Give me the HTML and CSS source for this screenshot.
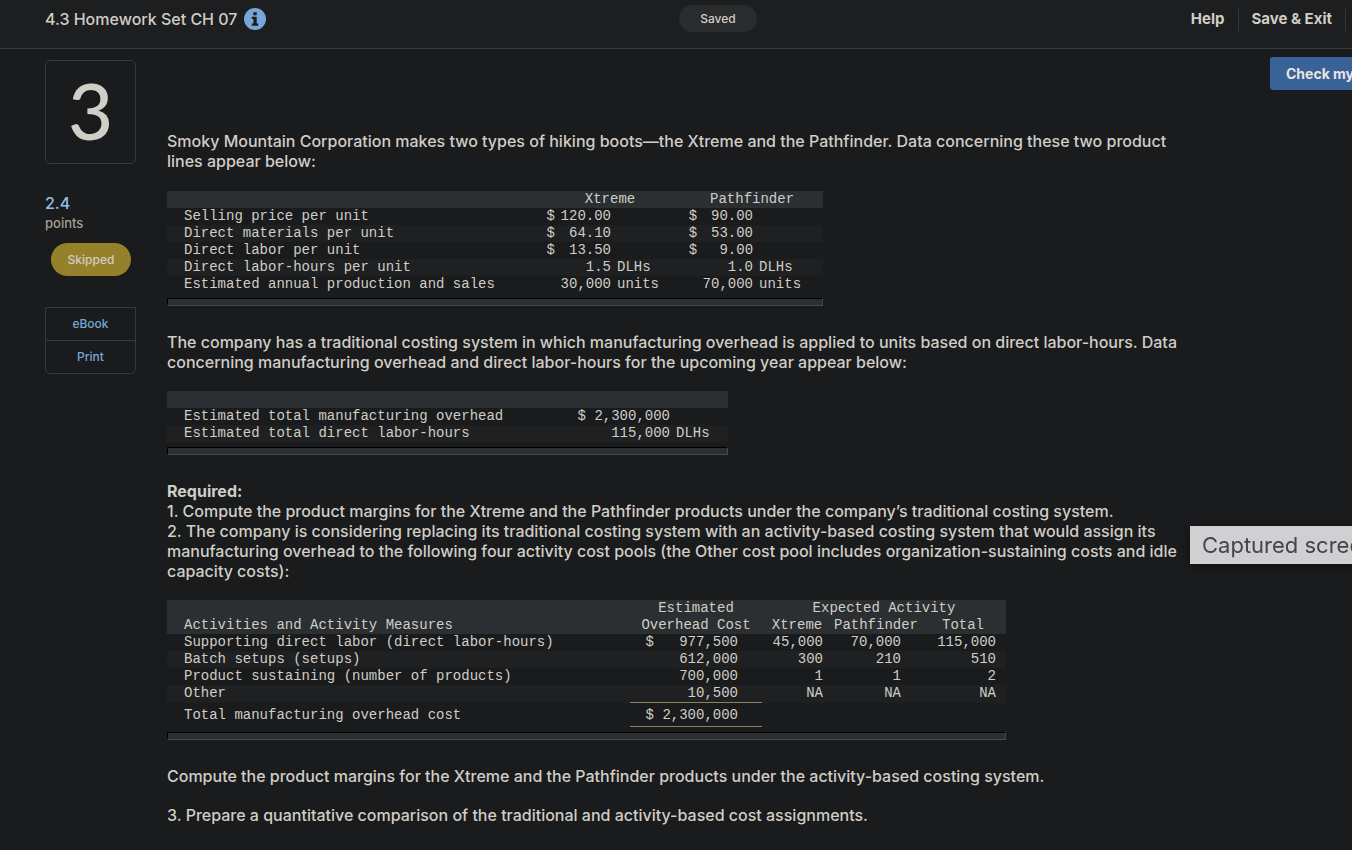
FILE: index.html
```html
<!DOCTYPE html>
<html lang="en">
<head>
  <meta charset="UTF-8" />
  <meta name="viewport" content="width=device-width, initial-scale=1" />
  <title>4.3 Homework Set CH 07</title>
  <link rel="stylesheet" href="styles.css">
</head>
<body>
  <header class="topbar">
    <div class="topbar-inner">
      <div class="assignment">
        <h1>4.3 Homework Set CH 07</h1>
        <button class="info" type="button" aria-label="Assignment info">
          <svg width="22" height="22" viewBox="0 0 22 22" aria-hidden="true">
            <circle cx="11" cy="11" r="11" fill="#78a6d8" />
            <path d="M9.3 4.2h3.4v3H9.3zM7.8 8.8h4.9v6.7h1.5v2.2H7.8v-2.2h1.6V11H7.8z" fill="#1b1d1e" />
          </svg>
        </button>
      </div>
      <span class="saved">Saved</span>
      <nav class="actions">
        <a href="#">Help</a>
        <a href="#">Save &amp; Exit</a>
      </nav>
    </div>
  </header>

  <main class="page">
    <aside class="sidebar">
      <div class="number">3</div>
      <div class="score">2.4</div>
      <div class="points">points</div>
      <span class="skipped">Skipped</span>
      <div class="tools">
        <a href="#">eBook</a>
        <a href="#">Print</a>
      </div>
    </aside>

    <section class="question">
      <div class="toolbar">
        <button class="check" type="button">Check my work</button>
      </div>

      <p class="first">Smoky Mountain Corporation makes two types of hiking boots—the Xtreme and the Pathfinder. Data concerning these two product<br>lines appear below:</p>

      <table class="data">
        <colgroup>
          <col class="w372"><col class="w16"><col class="w56"><col class="w70"><col class="w16"><col class="w56"><col class="w70">
        </colgroup>
        <thead>
          <tr><th></th><th colspan="3">Xtreme</th><th colspan="3">Pathfinder</th></tr>
        </thead>
        <tbody>
          <tr><td>Selling price per unit</td><td>$</td><td>120.00</td><td></td><td>$</td><td>90.00</td><td></td></tr>
          <tr><td>Direct materials per unit</td><td>$</td><td>64.10</td><td></td><td>$</td><td>53.00</td><td></td></tr>
          <tr><td>Direct labor per unit</td><td>$</td><td>13.50</td><td></td><td>$</td><td>9.00</td><td></td></tr>
          <tr><td>Direct labor-hours per unit</td><td></td><td>1.5</td><td class="unit">DLHs</td><td></td><td>1.0</td><td class="unit">DLHs</td></tr>
          <tr><td>Estimated annual production and sales</td><td></td><td>30,000</td><td class="unit">units</td><td></td><td>70,000</td><td class="unit">units</td></tr>
        </tbody>
        <tfoot>
          <tr><td colspan="7"><div class="bar"></div></td></tr>
        </tfoot>
      </table>

      <p>The company has a traditional costing system in which manufacturing overhead is applied to units based on direct labor-hours. Data<br>concerning manufacturing overhead and direct labor-hours for the upcoming year appear below:</p>

      <table class="data">
        <colgroup>
          <col class="w403"><col class="w16"><col class="w84"><col class="w58">
        </colgroup>
        <thead>
          <tr><th></th><th></th><th></th><th></th></tr>
        </thead>
        <tbody>
          <tr><td>Estimated total manufacturing overhead</td><td>$</td><td>2,300,000</td><td></td></tr>
          <tr><td>Estimated total direct labor-hours</td><td></td><td>115,000</td><td class="unit">DLHs</td></tr>
        </tbody>
        <tfoot>
          <tr><td colspan="4"><div class="bar"></div></td></tr>
        </tfoot>
      </table>

      <p><strong>Required:</strong><br>1. Compute the product margins for the Xtreme and the Pathfinder products under the company’s traditional costing system.<br>2. The company is considering replacing its traditional costing system with an activity-based costing system that would assign its<br>manufacturing overhead to the following four activity cost pools (the Other cost pool includes organization-sustaining costs and idle<br>capacity costs):</p>

      <table class="data activity">
        <colgroup>
          <col class="w463"><col class="w24"><col class="w84"><col class="w24"><col class="w70"><col class="w88"><col class="w86">
        </colgroup>
        <thead>
          <tr><th></th><th colspan="3">Estimated</th><th colspan="3">Expected Activity</th></tr>
          <tr><th>Activities and Activity Measures</th><th colspan="3">Overhead Cost</th><th>Xtreme</th><th>Pathfinder</th><th>Total</th></tr>
        </thead>
        <tbody>
          <tr><td>Supporting direct labor (direct labor-hours)</td><td>$</td><td>977,500</td><td></td><td>45,000</td><td>70,000</td><td>115,000</td></tr>
          <tr><td>Batch setups (setups)</td><td></td><td>612,000</td><td></td><td>300</td><td>210</td><td>510</td></tr>
          <tr><td>Product sustaining (number of products)</td><td></td><td>700,000</td><td></td><td>1</td><td>1</td><td>2</td></tr>
          <tr><td>Other</td><td></td><td>10,500</td><td></td><td>NA</td><td>NA</td><td>NA</td></tr>
          <tr class="total"><td>Total manufacturing overhead cost</td><td class="sum">$</td><td class="sum">2,300,000</td><td class="sum"></td><td></td><td></td><td></td></tr>
        </tbody>
        <tfoot>
          <tr><td colspan="7"><div class="bar"></div></td></tr>
        </tfoot>
      </table>

      <p>Compute the product margins for the Xtreme and the Pathfinder products under the activity-based costing system.</p>
      <p class="next">3. Prepare a quantitative comparison of the traditional and activity-based cost assignments.</p>
    </section>
  </main>

  <div class="toast" role="status">Captured screenshot</div>
</body>
</html>
```
FILE: styles.css
```css
* {
  box-sizing: border-box;
}
body {
  margin: 0;
  background: #191b1c;
  color: #d1cdc7;
  font-family: Inter, "Liberation Sans", sans-serif;
  font-size: 16px;
  font-weight: 500;
  line-height: 20px;
  overflow: hidden;
}
a {
  text-decoration: none;
}
button {
  font-family: inherit;
  border: none;
  cursor: pointer;
}

/* top bar, runs past the right edge of the window */
.topbar {
  background: #1c1e1f;
  border-bottom: 1px solid #36393b;
  overflow: hidden;
}
.topbar-inner {
  display: grid;
  grid-template-columns: 1fr auto 1fr;
  align-items: start;
  height: 48px;
  margin-right: -84px;
  padding: 5px 45px 0;
}
.assignment {
  display: flex;
  align-items: center;
  gap: 7px;
  height: 28px;
}
.assignment h1 {
  margin: 0;
  font-size: 16px;
  font-weight: 500;
}
.info {
  display: flex;
  padding: 0;
  background: none;
}
.saved {
  padding: 0 21px;
  border-radius: 14px;
  background: #292b2d;
  font-size: 12px;
  line-height: 27px;
}
.actions {
  display: flex;
  justify-content: flex-end;
  padding: 4px 45px 0 0;
}
.actions a {
  padding: 0 13px;
  border-right: 1px solid #36393b;
  color: #d1cdc7;
  font-size: 15px;
  font-weight: bold;
  line-height: 20px;
  height: 22px;
}

.page {
  display: grid;
  grid-template-columns: 91px 1fr;
  gap: 31px;
  margin-right: -84px;
  padding: 0 45px;
}

/* left column */
.sidebar {
  padding-top: 11px;
}
.number {
  height: 104px;
  border: 1px solid #36393b;
  border-radius: 5px;
  font-family: Lato, sans-serif;
  font-size: 78px;
  line-height: 98px;
  text-align: center;
}
.score {
  margin-top: 29px;
  color: #93bfe8;
}
.points {
  color: #a59f93;
  font-size: 13px;
}
.skipped {
  display: block;
  margin: 10px 5px 31px 6px;
  border-radius: 17px;
  background: #94812a;
  font-size: 12px;
  line-height: 33px;
  text-align: center;
}
.tools {
  border: 1px solid #36393b;
  border-radius: 0 0 5px 5px;
}
.tools a {
  display: block;
  color: #78a6d8;
  font-size: 12px;
  line-height: 32px;
  text-align: center;
}
.tools a + a {
  border-top: 1px solid #36393b;
}

/* question text */
.toolbar {
  display: flex;
  justify-content: flex-end;
  padding-top: 8px;
}
.check {
  width: 121px;
  padding: 0 0 0 16px;
  border-radius: 3px;
  background: #3b6296;
  color: #e8e6e3;
  font-size: 14px;
  font-weight: bold;
  line-height: 33px;
  text-align: left;
  white-space: nowrap;
}
.question p {
  margin: 26px 0 19px;
}
.question .first {
  margin: 41px 0 20px;
}
.question .next {
  margin-top: 19px;
}

/* data tables */
.data {
  table-layout: fixed;
  width: min-content;
  border-collapse: collapse;
  font-family: "Courier New", "Liberation Mono", monospace;
  font-size: 14px;
  font-weight: normal;
  line-height: 17px;
}
.data th {
  height: 17px;
  padding: 0;
  background: #2b2f31;
  font-weight: normal;
}
.data td {
  padding: 0;
  text-align: right;
  white-space: nowrap;
}
.data th:first-child,
.data td:first-child {
  padding-left: 17px;
  text-align: left;
}
.data tbody tr:nth-child(even) {
  background: #1e2021;
}
.data .unit {
  padding-left: 6px;
  text-align: left;
}
.data tfoot td:first-child {
  padding: 5px 0 0;
}
.bar {
  height: 8px;
  border: 1px solid;
  border-color: #000 #45494b #45494b #000;
  background: #2b2f31;
}
.activity td:nth-child(5) {
  padding-right: 9px;
}
.activity td:nth-child(6) {
  padding-right: 19px;
}
.activity td:nth-child(7) {
  padding-right: 10px;
}
.activity .total td {
  padding-top: 4px;
  padding-bottom: 2px;
}
.activity .sum {
  border-top: 1px solid #8c8263;
  border-bottom: 1px solid #8c8263;
}
.w16 { width: 16px; }
.w24 { width: 24px; }
.w56 { width: 56px; }
.w58 { width: 58px; }
.w70 { width: 70px; }
.w84 { width: 84px; }
.w86 { width: 86px; }
.w88 { width: 88px; }
.w372 { width: 372px; }
.w403 { width: 403px; }
.w463 { width: 463px; }

/* system notice over the page */
.toast {
  position: fixed;
  top: 526px;
  left: calc(100% - 162px);
  padding: 0 12px;
  background: #d0d0d2;
  color: #444547;
  font-family: Inter, sans-serif;
  font-size: 22px;
  font-weight: normal;
  line-height: 38px;
  white-space: nowrap;
  box-shadow: 0 2px 8px rgba(0, 0, 0, 0.4);
}
```
